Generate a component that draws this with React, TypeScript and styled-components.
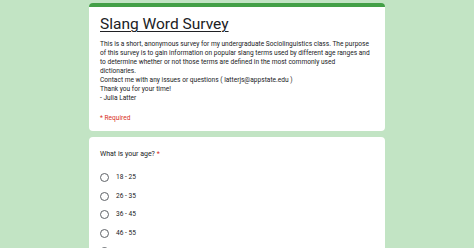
import React from "react";
import styled, { createGlobalStyle } from "styled-components";

const GlobalStyle = createGlobalStyle`
  html, body {
    margin: 0;
    padding: 0;
    background: #c2e4c4;
    font-family: Roboto, "Liberation Sans", Arial, sans-serif;
  }
`;

const options = ["18 - 25", "26 - 35", "36 - 45", "46 - 55", "56 +"];

const App = () => {
  return (
    <S.Page>
      <GlobalStyle />
      <S.HeaderCard>
        <S.Title>Slang Word Survey</S.Title>
        <S.Description>
          This is a short, anonymous survey for my undergraduate Sociolinguistics class. The purpose
          of this survey is to gain information on popular slang terms used by different age ranges and
          to determine whether or not those terms are defined in the most commonly used
          <br />
          dictionaries.
          <br />
          Contact me with any issues or questions ( latterjs@appstate.edu )
          <br />
          Thank you for your time!
          <br />- Julia Latter
        </S.Description>
        <S.Required>* Required</S.Required>
      </S.HeaderCard>
      <S.QuestionCard>
        <S.Question>
          What is your age? <S.Star>*</S.Star>
        </S.Question>
        <S.Options>
          {options.map((o) => (
            <S.Option key={o}>
              <S.Radio />
              <S.OptionLabel>{o}</S.OptionLabel>
            </S.Option>
          ))}
        </S.Options>
      </S.QuestionCard>
    </S.Page>
  );
};

export default App;

const S = {
  Page: styled.div`
    display: flex;
    flex-direction: column;
    align-items: center;
    gap: 6px;
    padding-top: 3px;
    height: 248px;
    overflow: hidden;
    box-sizing: border-box;
  `,
  HeaderCard: styled.div`
    width: 296px;
    box-sizing: border-box;
    background: #fff;
    border-top: 4px solid #43a047;
    border-radius: 4px;
    padding: 6px 11px 8px;
  `,
  Title: styled.h1`
    margin: 0 0 5px;
    font-size: 15.5px;
    font-weight: 400;
    color: #202124;
    text-decoration: underline;
    text-decoration-thickness: 1px;
    text-underline-offset: 2px;
    line-height: 22px;
  `,
  Description: styled.div`
    font-size: 6.6px;
    line-height: 9px;
    color: #202124;
  `,
  Required: styled.div`
    margin-top: 11px;
    font-size: 6.6px;
    line-height: 9px;
    color: #d93025;
  `,
  QuestionCard: styled.div`
    width: 296px;
    box-sizing: border-box;
    background: #fff;
    border-radius: 4px;
    padding: 12px 11px;
    flex: 1;
  `,
  Question: styled.div`
    font-size: 7px;
    line-height: 10px;
    color: #202124;
  `,
  Star: styled.span`
    color: #d93025;
  `,
  Options: styled.div`
    display: flex;
    flex-direction: column;
    gap: 9.5px;
    margin-top: 14px;
  `,
  Option: styled.div`
    display: flex;
    align-items: center;
    gap: 7px;
  `,
  Radio: styled.span`
    width: 9px;
    height: 9px;
    box-sizing: border-box;
    border: 1.3px solid #5f6368;
    border-radius: 50%;
  `,
  OptionLabel: styled.span`
    font-size: 6.6px;
    line-height: 9px;
    color: #202124;
  `,
};
